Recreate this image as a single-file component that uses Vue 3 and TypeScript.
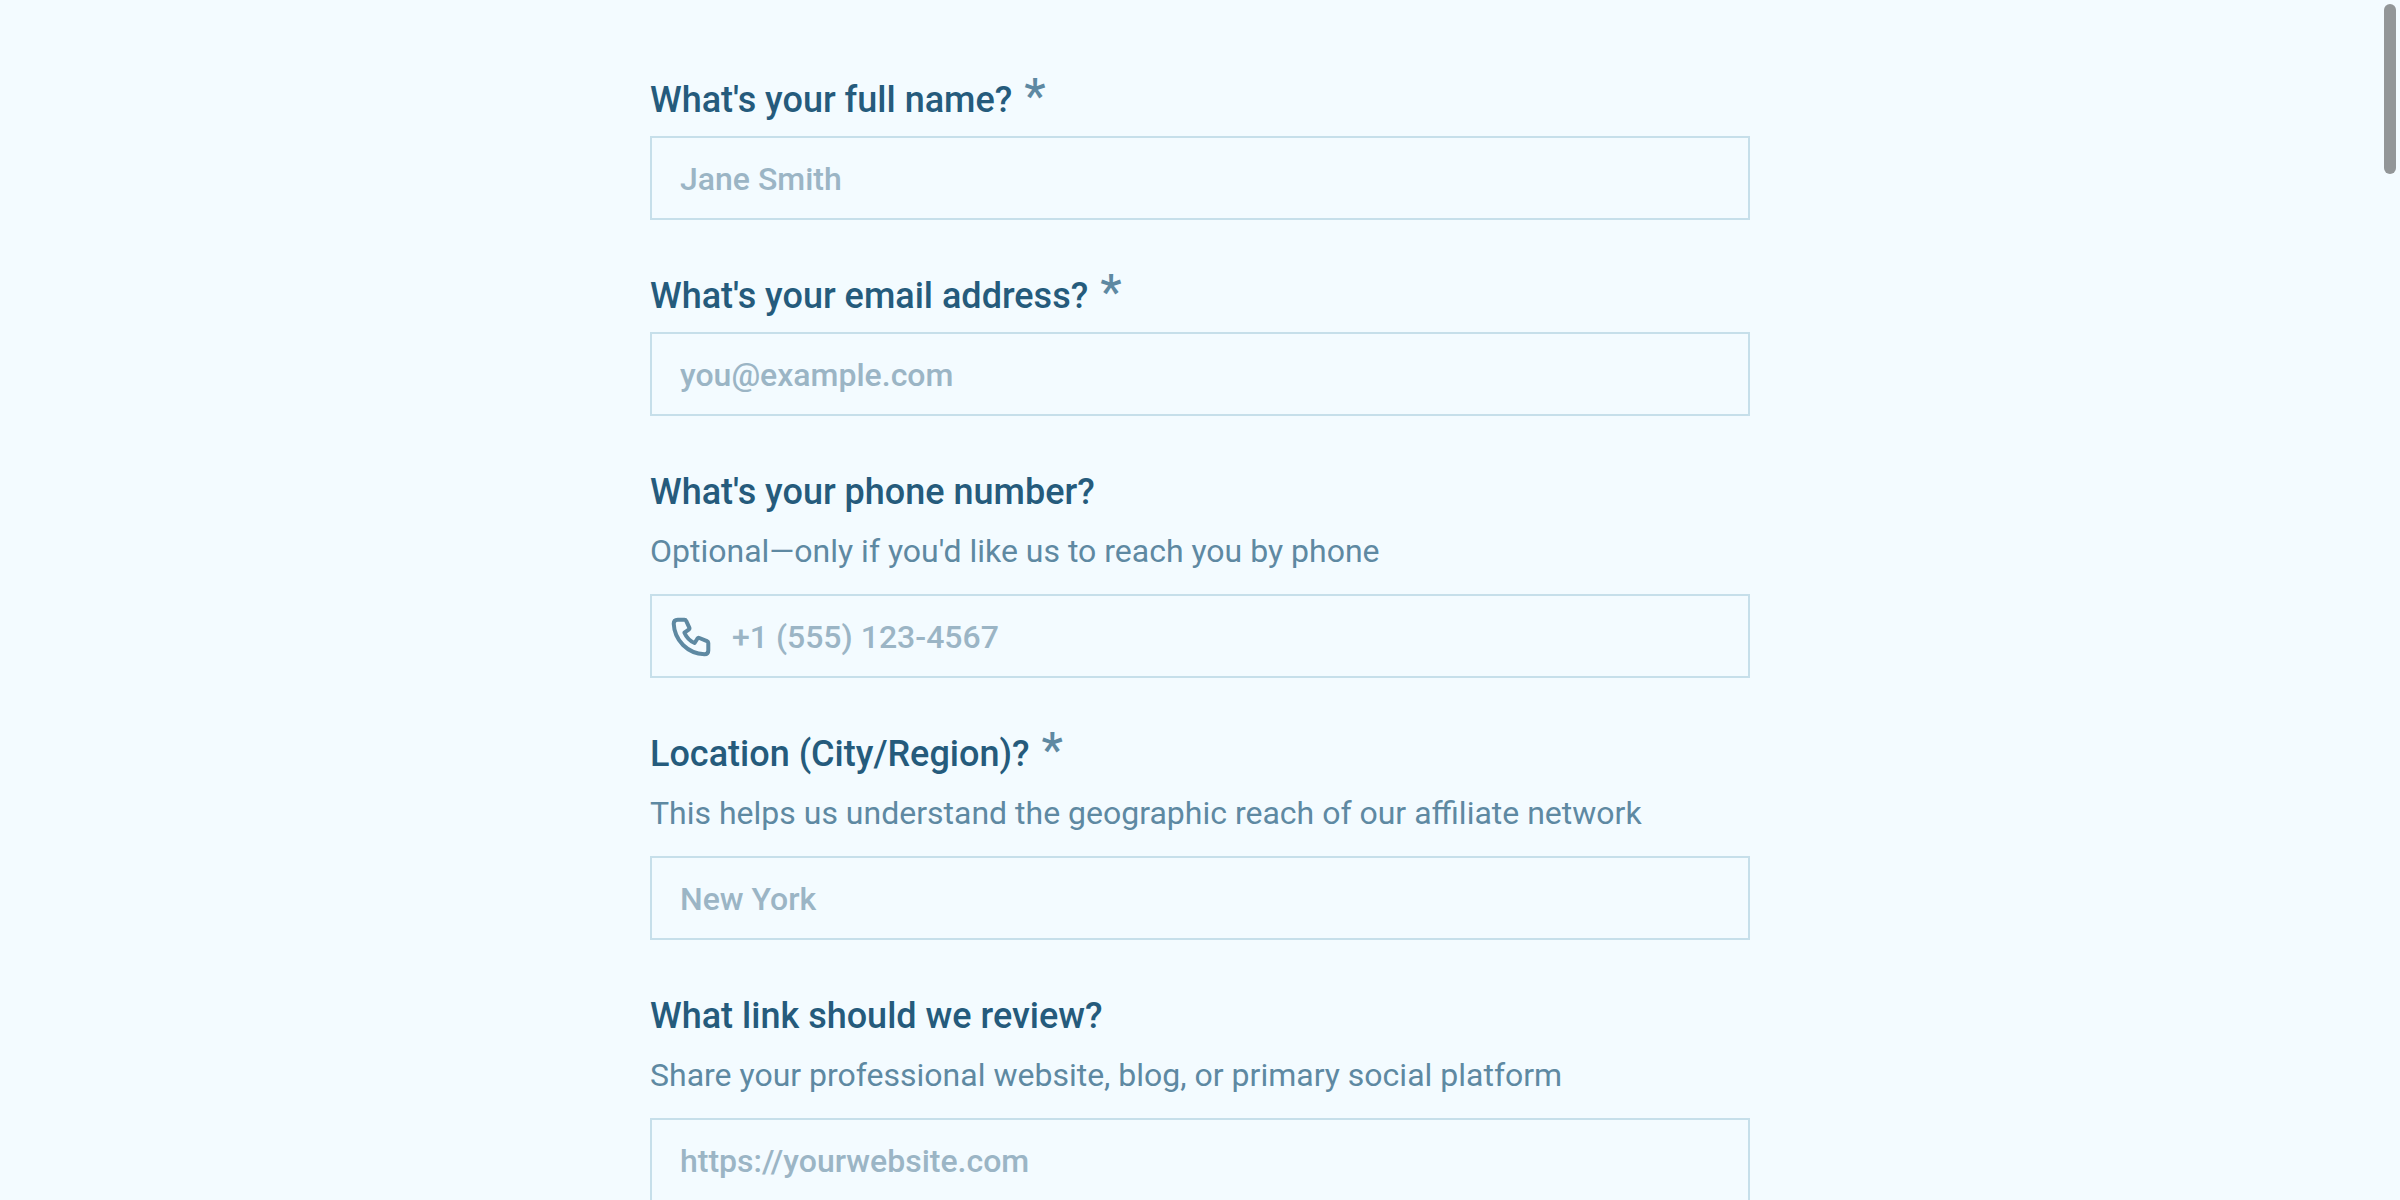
<script setup lang="ts">
interface Field {
  id: string
  label: string
  type: string
  placeholder: string
  required?: boolean
  hint?: string
  icon?: boolean
}

const fields: Field[] = [
  { id: 'name', label: "What's your full name?", type: 'text', placeholder: 'Jane Smith', required: true },
  { id: 'email', label: "What's your email address?", type: 'email', placeholder: 'you@example.com', required: true },
  {
    id: 'phone',
    label: "What's your phone number?",
    type: 'tel',
    placeholder: '+1 (555) 123-4567',
    hint: "Optional—only if you'd like us to reach you by phone",
    icon: true,
  },
  {
    id: 'location',
    label: 'Location (City/Region)?',
    type: 'text',
    placeholder: 'New York',
    required: true,
    hint: 'This helps us understand the geographic reach of our affiliate network',
  },
  {
    id: 'link',
    label: 'What link should we review?',
    type: 'url',
    placeholder: 'https://yourwebsite.com',
    hint: 'Share your professional website, blog, or primary social platform',
  },
]
</script>

<template>
  <main class="page">
    <form class="form" @submit.prevent>
      <div v-for="field in fields" :key="field.id" class="field">
        <div class="heading">
          <label class="label" :for="field.id">{{ field.label }}</label>
          <span v-if="field.required" class="required" aria-hidden="true">*</span>
        </div>
        <p v-if="field.hint" :id="`${field.id}-hint`" class="hint">{{ field.hint }}</p>
        <div class="control">
          <svg v-if="field.icon" class="icon" viewBox="0 0 48 48" aria-hidden="true">
            <path
              d="M10.7 6.7H17.4Q18.7 6.7 19.2 7.9L22.3 14.6Q22.8 15.8 21.7 16.6L17.4 19.7C19.3 24 23 28 27.6 30L30.5 25.5Q31.2 24.5 32.4 25L40 28.1Q41.3 28.6 41.3 30V37.5Q41.3 41.3 37.5 41.3C20.5 40.5 7.5 27.5 6.7 10.7Q6.7 6.7 10.7 6.7Z"
            />
          </svg>
          <input
            :id="field.id"
            class="input"
            :type="field.type"
            :placeholder="field.placeholder"
            :required="field.required"
            :aria-describedby="field.hint ? `${field.id}-hint` : undefined"
          />
        </div>
      </div>
    </form>
    <div class="scroll-thumb" aria-hidden="true"></div>
  </main>
</template>

<style>
body {
  margin: 0;
  background: #f3fbff;
}
</style>

<style scoped>
.page {
  height: 100vh;
  overflow-y: auto;
  scrollbar-width: none;
  background: #f3fbff;
  font-family: Roboto, "Liberation Sans", sans-serif;
}

.form {
  box-sizing: border-box;
  max-width: 1100px;
  margin: 0 auto;
  padding: 76px 0;
  display: flex;
  flex-direction: column;
  gap: 52px;
}

.heading {
  display: flex;
  gap: 12px;
  height: 48px;
  margin-bottom: 12px;
}

.label {
  font-size: 36px;
  font-weight: 500;
  line-height: 48px;
  color: #255b7c;
}

.required {
  font-size: 48px;
  font-weight: 500;
  line-height: 40px;
  color: #5e89a2;
}

.hint {
  margin: 0 0 20px;
  font-size: 32px;
  line-height: 46px;
  color: #5e89a2;
}

.control {
  display: flex;
  align-items: center;
  box-sizing: border-box;
  height: 84px;
  padding-top: 2px;
  border: 2px solid #c6dfea;
}

.control:focus-within {
  border-color: #5e89a2;
}

.icon {
  flex: none;
  width: 48px;
  height: 48px;
  margin-left: 15px;
  margin-right: -11px;
  fill: none;
  stroke: #5e89a2;
  stroke-width: 4;
  stroke-linecap: round;
  stroke-linejoin: round;
}

.input {
  flex: 1;
  min-width: 0;
  height: 100%;
  padding: 0 28px;
  border: 0;
  outline: 0;
  background: transparent;
  font-family: inherit;
  font-size: 32px;
  font-weight: 500;
  color: #255b7c;
}

.input::placeholder {
  color: #9bb5c5;
  opacity: 1;
}

.scroll-thumb {
  position: fixed;
  top: 4px;
  right: 4px;
  width: 12px;
  height: 170px;
  border-radius: 6px;
  background: #929698;
}
</style>
